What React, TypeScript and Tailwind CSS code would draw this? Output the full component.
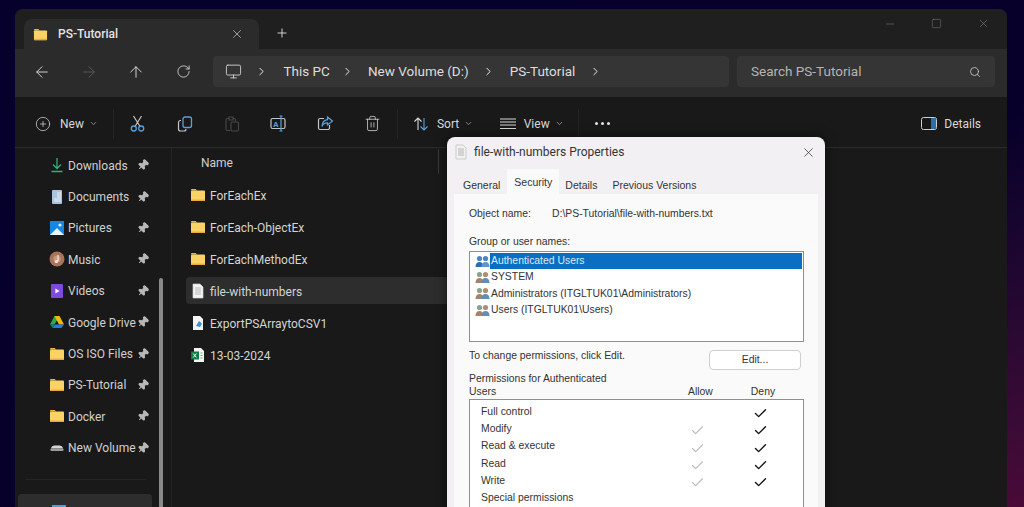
import React from "react";
import { ArrowLeft, ArrowRight, ArrowUp, RotateCw, Monitor, ChevronRight, Search, Plus, X, Minus, Square, ChevronDown, Trash2, PlusCircle, Pin, Check } from "lucide-react";

const font = "font-['Roboto','Open_Sans',sans-serif]";

function Folder({ size = 16, className = "" }: { size?: number; className?: string }) {
  return (
    <svg width={size} height={size} viewBox="0 0 16 16" className={className}>
      <path d="M1 3.2C1 2.5 1.5 2 2.2 2h3.4l1.6 1.6H1z" fill="#e9b64a" />
      <rect x="1" y="3.6" width="14" height="10.4" rx="1" fill="#fbd266" />
      <rect x="1" y="12.6" width="14" height="1.4" fill="#e8a93a" />
    </svg>
  );
}

function Doc({ dark = false }: { dark?: boolean }) {
  return (
    <svg width="16" height="16" viewBox="0 0 16 16">
      <path d="M3 1h7l3 3v11H3z" fill={dark ? "#f1f1f1" : "#f4f4f4"} stroke={dark ? "#bdbdbd" : "#cfcfcf"} strokeWidth="0.7" />
      <path d="M5 5h6M5 7h6M5 9h6M5 11h6" stroke="#a8a8a8" strokeWidth="0.8" />
    </svg>
  );
}

function UsersIcon({ blue = false }: { blue?: boolean }) {
  const c1 = blue ? "#4b86c4" : "#8aa38f";
  const c2 = blue ? "#2e6cab" : "#a5826a";
  return (
    <svg width="15" height="13" viewBox="0 0 15 13" className="shrink-0">
      <circle cx="4.5" cy="3.5" r="2.6" fill={c1} />
      <path d="M0.5 12c0-3.2 1.6-5 4-5s4 1.800 4 5z" fill={c2} />
      <circle cx="10.5" cy="3.5" r="2.6" fill={blue ? "#4b86c4" : "#b08c72"} />
      <path d="M6.5 12c0-3.2 1.6-5 4-5s4 1.800 4 5z" fill={blue ? "#5b94cf" : "#5f8fb5"} />
    </svg>
  );
}

const navItems: [string, React.ReactNode][] = [
  ["Downloads", <svg width="16" height="16" viewBox="0 0 16 16" fill="none" stroke="#2fb27a" strokeWidth="1.3"><path d="M8 1v10M4 7.5 8 11.5l4-4M2.5 14.500h11" /></svg>],
  ["Documents", <svg width="16" height="16" viewBox="0 0 16 16"><rect x="3" y="1" width="10" height="14" rx="1" fill="#a9c4dc" /><path d="M8 4h4M8 6h4M8 8h4M5 10h7M5 12h7" stroke="#f2f6fa" strokeWidth="0.9" /></svg>],
  ["Pictures", <svg width="16" height="16" viewBox="0 0 16 16"><rect x="1" y="1" width="14" height="14" fill="#1687e0" /><path d="M1 15l7-7 7 7z" fill="#eaf4fc" /><circle cx="11" cy="5" r="1.6" fill="#d6ecfb" /></svg>],
  ["Music", <svg width="16" height="16" viewBox="0 0 16 16"><circle cx="8" cy="8" r="7.5" fill="#a9745a" /><circle cx="8" cy="8" r="3.6" fill="#c79a80" /><path d="M9 4v6.200" stroke="#f3e7df" strokeWidth="1.2" /><circle cx="7.4" cy="10.6" r="1.6" fill="#f3e7df" /></svg>],
  ["Videos", <svg width="16" height="16" viewBox="0 0 16 16"><rect x="2" y="1" width="12" height="14" rx="1" fill="#7d4ae0" /><path d="M6.4 5.4v5.2L10.6 8z" fill="#fff" /></svg>],
  ["Google Drive", <svg width="16" height="16" viewBox="0 0 16 16"><path d="M5.5 2h5l-5 8.600H1z" fill="#2fa84f" /><path d="M5.5 2h5L15 10.600h-5z" fill="#f5b800" /><path d="M3.6 14 6 10.600h9L12.4 14z" fill="#2b78e4" /><path d="M1 10.600h5L3.600 14z" fill="#00897b" /></svg>],
  ["OS ISO Files", <Folder />],
  ["PS-Tutorial", <Folder />],
  ["Docker", <Folder />],
  ["New Volume", <svg width="16" height="16" viewBox="0 0 16 16"><path d="M2 8.500C2.500 6 4 5.500 8 5.500s5.500.5 6 3z" fill="#d5d5d5" /><rect x="1.500" y="8.500" width="13" height="2.500" rx="0.800" fill="#9b9b9b" /></svg>],
];

const files: [string, React.ReactNode][] = [
  ["ForEachEx", <Folder />],
  ["ForEach-ObjectEx", <Folder />],
  ["ForEachMethodEx", <Folder />],
  ["file-with-numbers", <Doc />],
  ["ExportPSArraytoCSV1", <svg width="16" height="16" viewBox="0 0 16 16"><path d="M3 1h7l3 3v11H3z" fill="#f4f4f4" /><path d="M6 11l3-5 3 2.500-2 3.500z" fill="#3f8fd6" /></svg>],
  ["13-03-2024", <svg width="16" height="16" viewBox="0 0 16 16"><path d="M4 1h7l3 3v11H4z" fill="#f4f4f4" /><rect x="1" y="4.500" width="8" height="8" fill="#107c41" /><path d="M3.200 6.500l3.200 4M6.400 6.500l-3.200 4" stroke="#fff" strokeWidth="1" /><path d="M10.500 6h2M10.500 8.500h2M10.500 11h2" stroke="#5cae83" strokeWidth="1.200" /></svg>],
];

const perms: [string, boolean, boolean][] = [
  ["Full control", false, true],
  ["Modify", true, true],
  ["Read & execute", true, true],
  ["Read", true, true],
  ["Write", true, true],
  ["Special permissions", false, false],
];

function Sep() {
  return <div className="w-px h-[30px] bg-[#242424] shrink-0" />;
}

export default function App() {
  return (
    <div className={`relative w-[1024px] h-[507px] overflow-hidden bg-gradient-to-br from-[#05002c] via-[#06002a] via-60% to-[#4a0a38] pt-[9px] pl-[15px] ${font}`}>
      <div className="w-[992px] h-[498px] rounded-t-lg overflow-hidden bg-[#191919] flex flex-col text-[#e0e0e0]">
        {/* Tab strip */}
        <div className="h-[40px] bg-[#1f1f1f] flex items-start pl-[9px] shrink-0">
          <div className="mt-[10px] w-[235px] h-[30px] bg-[#2b2b2b] rounded-t-lg flex items-center pl-[9px] pr-[15px]">
            <Folder size={15} />
            <span className="ml-[10px] text-[12px] font-medium text-[#e4e4e4]">PS-Tutorial</span>
            <X size={14} strokeWidth={1.2} className="ml-auto text-[#cfcfcf]" />
          </div>
          <Plus size={14} strokeWidth={1.6} className="ml-[16px] mt-[17px] text-[#dcdcdc]" />
          <div className="ml-auto flex items-center gap-[35px] mt-[8px] pr-[17px] text-[#777]">
            <Minus size={12} strokeWidth={1.2} />
            <Square size={11} strokeWidth={1.2} />
            <X size={13} strokeWidth={1.2} />
          </div>
        </div>
        {/* Address bar */}
        <div className="h-[48px] bg-[#2b2b2b] flex items-center shrink-0 pl-[18px] pr-[12px] pb-[3px]">
          <ArrowLeft size={18} strokeWidth={1.2} className="text-[#e4e4e4]" />
          <ArrowRight size={18} strokeWidth={1.2} className="ml-[29px] text-[#5c5c5c]" />
          <ArrowUp size={18} strokeWidth={1.2} className="ml-[29px] text-[#e4e4e4]" />
          <RotateCw size={15} strokeWidth={1.3} className="ml-[31px] text-[#e4e4e4]" />
          <div className="ml-[22px] w-[516px] h-[31px] bg-[#353535] rounded flex items-center pl-[12px] text-[13.500px] text-[#dddddd]">
            <Monitor size={17} strokeWidth={1.2} className="text-[#dcdcdc]" />
            <ChevronRight size={13} strokeWidth={1.8} className="ml-[13px] text-[#eee]" />
            <span className="ml-[15.500px]">This PC</span>
            <ChevronRight size={13} strokeWidth={1.8} className="ml-[11px] text-[#eee]" />
            <span className="ml-[14px]">New Volume (D:)</span>
            <ChevronRight size={13} strokeWidth={1.8} className="ml-[13px] text-[#eee]" />
            <span className="ml-[15px]">PS-Tutorial</span>
            <ChevronRight size={13} strokeWidth={1.8} className="ml-[13.500px] text-[#eee]" />
          </div>
          <div className="ml-[8px] w-[258px] h-[31px] bg-[#353535] rounded flex items-center px-[14px] text-[13.500px] text-[#b4b4b4]">
            <span>Search PS-Tutorial</span>
            <Search size={12} strokeWidth={1.6} className="ml-auto text-[#d0d0d0]" />
          </div>
        </div>
        {/* Toolbar */}
        <div className="h-[51px] bg-[#191919] border-b border-[#2c2c2c] flex items-center pl-[20px] pr-[26px] pt-[3px] shrink-0 text-[12px] text-[#d8d8d8]">
          <PlusCircle size={16} strokeWidth={1.1} />
          <span className="ml-[9px]">New</span>
          <ChevronDown size={9} className="ml-[5px] text-[#aaa]" />
          <div className="ml-[15px]"><Sep /></div>
          <svg width="17" height="17" viewBox="0 0 17 17" fill="none" className="ml-[15.500px]">
            <path d="M4.500 1 11 11.500M12.500 1 6 11.500" stroke="#cfcfcf" strokeWidth="1.100" />
            <circle cx="4.800" cy="13.500" r="2.500" stroke="#5aa0dc" strokeWidth="1.300" />
            <circle cx="12.200" cy="13.500" r="2.500" stroke="#5aa0dc" strokeWidth="1.300" />
          </svg>
          <svg width="16" height="16" viewBox="0 0 16 16" fill="none" className="ml-[30.500px]">
            <path d="M4 4.500H3.500a2 2 0 0 0-2 2V13a2 2 0 0 0 2 2H7a2 2 0 0 0 2-2" stroke="#c4c4c4" strokeWidth="1.200" />
            <rect x="6" y="1" width="8.500" height="10.500" rx="2" stroke="#5aa0dc" strokeWidth="1.300" />
          </svg>
          <svg width="16" height="16" viewBox="0 0 16 16" fill="none" className="ml-[31px]" stroke="#484848" strokeWidth="1.100">
            <path d="M5 2.500H3.500a1.500 1.500 0 0 0-1.500 1.500v9a1.500 1.500 0 0 0 1.500 1.500H6" />
            <path d="M5 1h4v3H5zM9 2.500h1A1.500 1.500 0 0 1 11.500 4v1.500" />
            <rect x="7" y="6" width="7.500" height="9" rx="1.200" />
          </svg>
          <svg width="17" height="17" viewBox="0 0 17 17" fill="none" className="ml-[30.500px]" strokeWidth="1.200">
            <rect x="1" y="3.500" width="14" height="10" rx="1.500" stroke="#c4c4c4" />
            <path d="M11 1v15M9.500 1h3M9.500 16h3" stroke="#5aa0dc" />
            <text x="3.200" y="11.500" fontSize="7.500" fontWeight="700" fill="#5aa0dc" stroke="none" fontFamily="Open Sans">A</text>
          </svg>
          <svg width="17" height="17" viewBox="0 0 17 17" fill="none" className="ml-[30px]" strokeWidth="1.200">
            <path d="M7 3.500H3A1.500 1.500 0 0 0 1.500 5v8A1.500 1.500 0 0 0 3 14.500h8a1.500 1.500 0 0 0 1.500-1.500v-3" stroke="#c4c4c4" />
            <path d="M10.500 2l5 4-5 4V7.800C7.500 7.800 5.800 9 5 11.500 5 7.500 7.300 5 10.500 4.600z" stroke="#5aa0dc" />
          </svg>
          <Trash2 size={17} strokeWidth={1.1} className="ml-[30px]" />
          <div className="ml-[15.500px]"><Sep /></div>
          <svg width="16" height="16" viewBox="0 0 16 16" fill="none" className="ml-[15px]" strokeWidth="1.100">
            <path d="M5 14V2M1.500 5.500 5 2l3.500 3.500" stroke="#d8d8d8" />
            <path d="M11 2v12M7.500 10.500 11 14l3.500-3.500" stroke="#5aa0dc" />
          </svg>
          <span className="ml-[8px]">Sort</span>
          <ChevronDown size={9} className="ml-[5px] text-[#aaa]" />
          <svg width="16" height="12" viewBox="0 0 16 12" className="ml-[26.500px]" stroke="#d8d8d8" strokeWidth="1">
            <path d="M0 1h16M0 4h16M0 7h16M0 10.500h16" />
          </svg>
          <span className="ml-[8px]">View</span>
          <ChevronDown size={9} className="ml-[5px] text-[#aaa]" />
          <div className="ml-[14px]"><Sep /></div>
          <div className="ml-[16px] flex gap-[3px]">
            <span className="w-[3px] h-[3px] rounded-full bg-[#e4e4e4]" />
            <span className="w-[3px] h-[3px] rounded-full bg-[#e4e4e4]" />
            <span className="w-[3px] h-[3px] rounded-full bg-[#e4e4e4]" />
          </div>
          <svg width="16" height="13" viewBox="0 0 16 13" fill="none" className="ml-auto">
            <rect x="0.500" y="0.500" width="15" height="12" rx="2" stroke="#cfcfcf" />
            <rect x="10" y="1" width="5" height="11" fill="#2d6ea8" />
          </svg>
          <span className="ml-[7px]">Details</span>
        </div>
        {/* Body */}
        <div className="flex-1 flex min-h-0">
          {/* Nav pane */}
          <div className="w-[141px] shrink-0 relative pt-[1.500px] text-[12px] text-[#d0d0d0]">
            {navItems.map(([n, icon]) => (
              <div key={n} className="h-[31.400px] flex items-center pl-[34px]">
                <span className="w-[19px] shrink-0 flex">{icon}</span>
                <span className="whitespace-nowrap w-[67px] shrink-0 pt-[1px]">{n}</span>
                <Pin size={12} className="ml-[2px] shrink-0 rotate-45 text-[#b8b8b8] fill-[#b8b8b8]" />
              </div>
            ))}
            <div className="mx-[10px] mt-[15.500px] h-px bg-[#242424]" />
            <div className="mt-[14px] ml-[3px] h-[40px] w-[134px] rounded bg-[#2d2d2d] flex pl-[34px] pt-[11px] gap-[3px]">
              <span className="w-[14px] h-[11px] bg-[#45a3dc] shrink-0" />
              <span>This PC</span>
            </div>
            <div className="absolute left-[144px] top-[130px] w-[4px] h-[230px] rounded bg-[#8a8a8a]" />
          </div>
          <div className="w-[15px] shrink-0" />
          <div className="w-px bg-[#242424] shrink-0" />
          {/* Files */}
          <div className="flex-1">
            <div className="h-[28px] pt-[1px]">
              <div className="w-[267px] h-[25px] border-r border-[#3a3a3a] flex items-center pl-[29px] pt-[2px] text-[12px] text-[#cfcfcf]">Name</div>
            </div>
            {files.map(([n, icon], i) => (
              <div key={n} className={`h-[27px] mt-[5px] ml-[14px] w-[262px] flex items-center pl-[4px] text-[12px] text-[#d4d4d4] ${i === 3 ? "bg-[#2d2d2d] rounded-l" : ""}`}>
                <span className="w-[20px] shrink-0 flex">{icon}</span>
                <span className="pt-[2px]">{n}</span>
              </div>
            ))}
          </div>
        </div>
      </div>

      {/* Properties dialog (floats over the explorer window) */}
      <div className="absolute left-[447px] top-[137px] w-[378px] h-[380px] rounded-t-lg bg-[#f3f0f3] shadow-[0_0_12px_rgba(0,0,0,0.6)] text-[#222] font-['Liberation_Sans',sans-serif]">
        <div className="h-[30px] flex items-center pl-[6px] pr-[9px]">
          <Doc dark />
          <span className="ml-[5px] text-[12px] text-[#333] font-['Roboto',sans-serif]">file-with-numbers Properties</span>
          <X size={15} strokeWidth={1.2} className="ml-auto text-[#333]" />
        </div>
        <div className="flex items-end h-[27px] pl-[7px] text-[10.500px] text-[#333]">
          <span className="pl-[9px] pr-[7px] pt-[5px] h-[21px]">General</span>
          <span className="px-[7px] h-[25px] pt-[6px] bg-[#fafafa]">Security</span>
          <span className="pl-[6px] pr-[8px] h-[21px] pt-[5px]">Details</span>
          <span className="pl-[7px] h-[21px] pt-[5px]">Previous Versions</span>
        </div>
        <div className="mx-[7px] h-[330px] bg-[#fafafa] px-[15px] pt-[13px] text-[10.400px] leading-[14px] text-[#333]">
          <div className="flex">
            <span className="w-[83px]">Object name:</span>
            <span>D:\PS-Tutorial\file-with-numbers.txt</span>
          </div>
          <div className="mt-[14px]">Group or user names:</div>
          <div className="mt-[2px] w-[335px] h-[91px] border border-[#8f8f8f] bg-white p-[1px]">
            {["Authenticated Users", "SYSTEM", "Administrators (ITGLTUK01\\Administrators)", "Users (ITGLTUK01\\Users)"].map((u, i) => (
              <div key={u} className="h-[16.300px] flex items-center pl-[4px]">
                <UsersIcon blue={i === 0} />
                <span className={`pl-[1px] h-full flex items-center ${i === 0 ? "flex-1 bg-[#0a6fc2] text-[#dfe9f3]" : ""}`}>{u}</span>
              </div>
            ))}
          </div>
          <div className="flex items-start justify-between mt-[8px] pr-[2px]">
            <span className="-mt-[1px]">To change permissions, click Edit.</span>
            <span className="w-[92px] h-[20px] border border-[#cfcfcf] rounded-sm bg-white flex items-center justify-center">Edit...</span>
          </div>
          <div className="flex items-end mt-[2px] h-[26px] leading-[12.500px]">
            <span className="w-[146px]">Permissions for Authenticated Users</span>
            <span className="ml-[73px]">Allow</span>
            <span className="ml-[38px]">Deny</span>
          </div>
          <div className="mt-[1px] w-[335px] h-[140px] border border-[#8f8f8f] bg-white pt-[3px]">
            {perms.map(([p, a, d]) => (
              <div key={p} className="h-[17.300px] flex items-center pl-[11px] relative">
                <span>{p}</span>
                {a && <Check size={15} strokeWidth={1.800} className="absolute left-[220px] top-[3px] text-[#bcbcbc]" />}
                {d && <Check size={15} strokeWidth={2.200} className="absolute left-[283px] top-[3px] text-[#111]" />}
              </div>
            ))}
          </div>
        </div>
      </div>
    </div>
  );
}
